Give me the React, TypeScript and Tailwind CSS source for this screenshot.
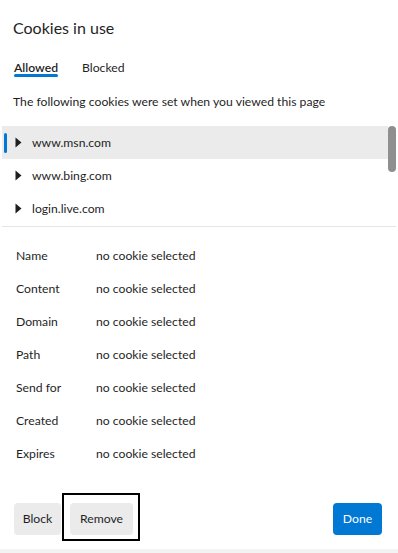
const SITES = ["www.msn.com", "www.bing.com", "login.live.com"];

const FIELDS = ["Name", "Content", "Domain", "Path", "Send for", "Created", "Expires"];

function Caret() {
  return (
    <svg width="7" height="11" viewBox="0 0 7 11" className="shrink-0">
      <path d="M0.5 0.5 L6.5 5.5 L0.5 10.5 Z" fill="#1f1f1f" />
    </svg>
  );
}

export default function App() {
  return (
    <div className="w-[398px] h-[553px] bg-white text-[#1f1f1f] text-[12.2px] flex flex-col overflow-hidden font-['Segoe_UI','Lato',sans-serif]">
      <h1 className="px-[13px] pt-[17px] text-[16px] leading-[22px] font-normal">Cookies in use</h1>

      <div className="flex gap-[24px] px-[14px] mt-[23px]">
        <div className="flex flex-col">
          <span className="font-semibold leading-[12px]">Allowed</span>
          <span className="h-[3px] bg-[#0078d4] mt-[0px] rounded-sm" />
        </div>
        <span className="leading-[12px]">Blocked</span>
      </div>

      <p className="px-[13px] mt-[16px] leading-[18px]">The following cookies were set when you viewed this page</p>

      <div className="relative mt-[15px] mx-[2px] h-[101px] border-b border-[#e5e5e5]">
        {SITES.map((s, i) => (
          <div
            key={s}
            className={`relative h-[33px] flex items-center gap-[10px] pl-[13px] mr-[8px] ${i === 0 ? "bg-[#ebebeb]" : ""}`}
          >
            {i === 0 && <span className="absolute left-[2px] top-[7px] w-[3px] h-[20px] rounded-sm bg-[#0078d4]" />}
            <Caret />
            <span className="pt-[2px]">{s}</span>
          </div>
        ))}
        <div className="absolute right-[0px] top-[0px] w-[8px] h-[46px] rounded-full bg-[#8f8f8f]" />
      </div>

      <div className="flex flex-col mt-[12px] px-[16px]">
        {FIELDS.map((f) => (
          <div key={f} className="h-[33px] flex items-center pt-[2px]">
            <span className="w-[80px]">{f}</span>
            <span>no cookie selected</span>
          </div>
        ))}
      </div>

      <div className="flex items-start px-[14px] mt-auto mb-[8px]">
        <button className="mt-[10px] h-[32px] w-[47px] rounded bg-[#ebebeb]">Block</button>
        <div className="ml-[1px] border-2 border-black pl-[6px] pr-[5px] pt-[8px] pb-[4px]">
          <button className="h-[32px] w-[63px] rounded bg-[#ebebeb]">Remove</button>
        </div>
        <button className="mt-[10px] ml-auto mr-[2px] h-[32px] w-[49px] rounded bg-[#0078d4] text-white">Done</button>
      </div>
      <div className="h-[4px] bg-[#f3f3f3]" />
    </div>
  );
}
